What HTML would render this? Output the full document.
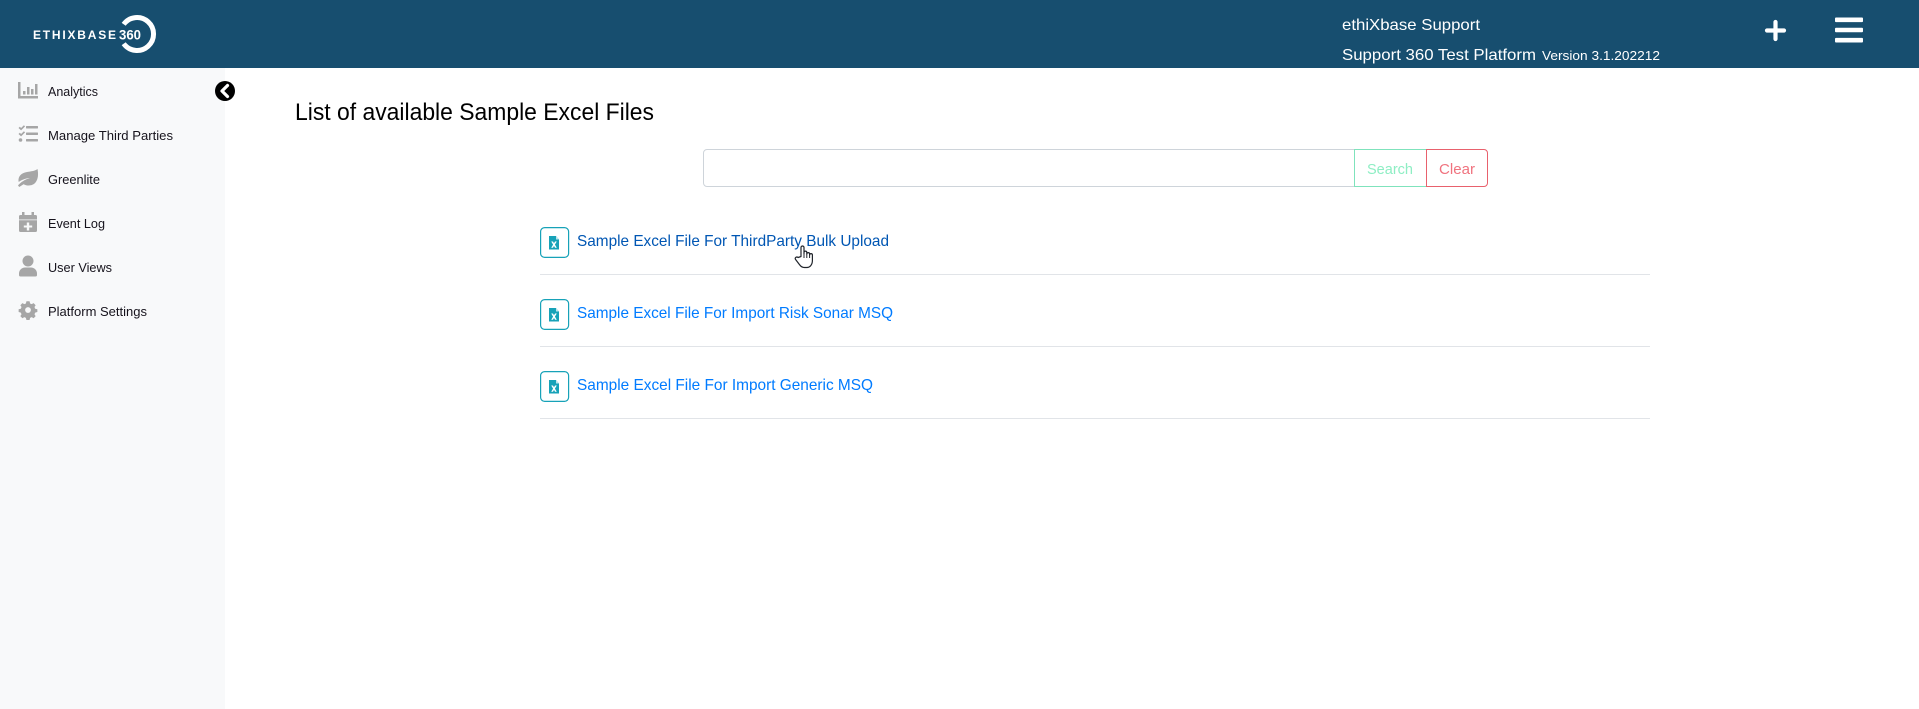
<!DOCTYPE html>
<html lang="en">
<head>
<meta charset="utf-8">
<title>Sample Excel Files</title>
<style>
html,body{margin:0;padding:0;width:1919px;height:709px;overflow:hidden;background:#fff}
svg{display:block}
text{font-family:"Liberation Sans",sans-serif}
</style>
</head>
<body>
<svg width="1919" height="709" viewBox="0 0 1919 709" xmlns="http://www.w3.org/2000/svg">
<defs>
<g id="xl">
<rect x="0.6" y="0.6" width="28" height="29.8" rx="4" fill="#fff" stroke="#17a2b8" stroke-width="1.2"/>
<path d="M9 9h7l3 3.500V22.500H9z" fill="#17a2b8"/>
<path d="M16 9v3.500h3z" fill="#bfe6ec"/>
<path d="M11.200 14.500h1.800l1 1.900 1-1.900h1.800l-1.900 3.100 1.900 3.200h-1.800l-1-1.900-1 1.900h-1.800l1.900-3.200z" fill="#fff"/>
</g>
</defs>

<rect width="1919" height="709" fill="#fff"/>
<rect width="1919" height="68" fill="#174e6f"/>
<rect y="68" width="225" height="641" fill="#f8f9fa"/>

<!-- logo -->
<text x="33" y="39" font-size="12" fill="#fff" font-weight="700" textLength="83" lengthAdjust="spacing">ETHIXBASE</text>
<text x="119" y="39.500" font-size="14" font-weight="700" fill="#fff" textLength="22" lengthAdjust="spacingAndGlyphs">360</text>
<path d="M123.700 24.300A16.500 16.500 0 1 1 123.700 43.700" fill="none" stroke="#fff" stroke-width="5"/>

<!-- header right -->
<text x="1342" y="30" font-size="16" fill="#fff" textLength="138" lengthAdjust="spacingAndGlyphs">ethiXbase Support</text>
<text x="1342" y="60" font-size="16" fill="#fff" textLength="194" lengthAdjust="spacingAndGlyphs">Support 360 Test Platform</text>
<text x="1542" y="60" font-size="13" fill="#fff" textLength="118" lengthAdjust="spacingAndGlyphs">Version 3.1.202212</text>
<path d="M1775.500 22v17M1767 30.500h17" stroke="#fff" stroke-width="4.200" stroke-linecap="round" fill="none"/>
<rect x="1835" y="17.500" width="28" height="4.600" rx="1" fill="#fff"/>
<rect x="1835" y="27.700" width="28" height="4.600" rx="1" fill="#fff"/>
<rect x="1835" y="37.900" width="28" height="4.600" rx="1" fill="#fff"/>

<!-- sidebar icons -->
<g fill="#a6a6a6">
<path d="M18 82h2.500v14H38v2.500H18z"/>
<rect x="23" y="91" width="2.500" height="3.500"/><rect x="27" y="87" width="2.500" height="7.500"/>
<rect x="31" y="89" width="2.500" height="5.500"/><rect x="35" y="84" width="2.500" height="10.500"/>
<path d="M18.500 128l1.300-1.200 1.300 1.200 2.800-2.800 1.200 1.200-4 4z"/>
<path d="M18.500 134l1.300-1.200 1.300 1.200 2.800-2.800 1.200 1.200-4 4z"/>
<circle cx="20.500" cy="140" r="1.800"/>
<rect x="26" y="126" width="12" height="2.500" rx=".6"/><rect x="26" y="132.500" width="12" height="2.500" rx=".6"/><rect x="26" y="139" width="12" height="2.500" rx=".6"/>
<path d="M37.500 169c1 5 .8 10-2 13.500-3 3.500-8 3.700-12 1.700-1.300.8-2.800 1.800-4.300 2.800l-1.200-1.600c3-3.400 7-6 12-7.400-4 .2-8 1.700-11.300 4-1-4.300 1.500-8 5.500-9.300 4.500-1.500 10-1 13.300-3.700z"/>
<path d="M22 212h2.500v3h7v-3H34v3h1.500a1.500 1.500 0 0 1 1.500 1.500v3H19v-3a1.500 1.500 0 0 1 1.500-1.500H22z"/>
<path d="M19 220.300h18v10.200a1.500 1.500 0 0 1-1.500 1.500h-15a1.500 1.500 0 0 1-1.500-1.500zm7.800 2.200v3h-3v2h3v3h2.400v-3h3v-2h-3v-3z" fill-rule="evenodd"/>
<circle cx="28" cy="261" r="5.500"/>
<path d="M19 275v-1.500c0-3.500 2.800-6 6-6h6c3.200 0 6 2.500 6 6v1.500a1.500 1.500 0 0 1-1.500 1.500h-15a1.500 1.500 0 0 1-1.500-1.500z"/>
<path fill-rule="evenodd" d="M26 300.500h4l.7 2.800 2 .9 2.500-1.400 2.600 2.700-1.500 2.400.9 2.100 2.800.7v3.600l-2.800.7-.9 2.100 1.500 2.400-2.600 2.700-2.500-1.400-2 .9-.7 2.800h-4l-.7-2.800-2-.9-2.500 1.400-2.600-2.700 1.500-2.400-.9-2.100-2.800-.7v-3.600l2.800-.7.9-2.100-1.500-2.400 2.600-2.700 2.500 1.400 2-.9zM28 308a3.700 3.700 0 1 0 0 7.400 3.700 3.700 0 0 0 0-7.400z" transform="translate(6.160 66.900) scale(.78)"/>
</g>

<!-- sidebar text -->
<g font-size="13" fill="#16131c">
<text x="48" y="96" textLength="50" lengthAdjust="spacingAndGlyphs">Analytics</text>
<text x="48" y="140" textLength="125" lengthAdjust="spacingAndGlyphs">Manage Third Parties</text>
<text x="48" y="184" textLength="52" lengthAdjust="spacingAndGlyphs">Greenlite</text>
<text x="48" y="228" textLength="57" lengthAdjust="spacingAndGlyphs">Event Log</text>
<text x="48" y="272" textLength="64" lengthAdjust="spacingAndGlyphs">User Views</text>
<text x="48" y="316" textLength="99" lengthAdjust="spacingAndGlyphs">Platform Settings</text>
</g>

<circle cx="225" cy="91" r="10" fill="#000"/>
<path d="M227.500 85.500L222 91l5.500 5.500" fill="none" stroke="#fff" stroke-width="3.200" stroke-linecap="round" stroke-linejoin="round"/>

<!-- title -->
<text x="295" y="120" font-size="24" fill="#000" textLength="359" lengthAdjust="spacingAndGlyphs">List of available Sample Excel Files</text>

<!-- search -->
<path d="M1354.500 149.500H707a3.500 3.500 0 0 0-3.500 3.500v30a3.500 3.500 0 0 0 3.500 3.500h647.500" fill="#fff" stroke="#ced4da"/>
<rect x="1354.500" y="149.500" width="72" height="37" fill="#fff" stroke="#7fe3bc"/>
<text x="1367" y="174" font-size="15" fill="#8eeec4" textLength="46" lengthAdjust="spacingAndGlyphs">Search</text>
<path d="M1426.500 149.500H1484a3.500 3.500 0 0 1 3.500 3.500v30a3.500 3.500 0 0 1-3.500 3.500h-57.500z" fill="#fff" stroke="#e8616d"/>
<text x="1439" y="174" font-size="15" fill="#f0737f" textLength="36" lengthAdjust="spacingAndGlyphs">Clear</text>

<!-- list -->
<use href="#xl" x="540" y="227"/>
<text x="577" y="246" font-size="16" fill="#0056b3" textLength="312" lengthAdjust="spacingAndGlyphs">Sample Excel File For ThirdParty Bulk Upload</text>
<rect x="540" y="274" width="1110" height="1" fill="#e1e4e8"/>
<use href="#xl" x="540" y="299"/>
<text x="577" y="318" font-size="16" fill="#007bff" textLength="316" lengthAdjust="spacingAndGlyphs">Sample Excel File For Import Risk Sonar MSQ</text>
<rect x="540" y="346" width="1110" height="1" fill="#e1e4e8"/>
<use href="#xl" x="540" y="371"/>
<text x="577" y="390" font-size="16" fill="#007bff" textLength="296" lengthAdjust="spacingAndGlyphs">Sample Excel File For Import Generic MSQ</text>
<rect x="540" y="418" width="1110" height="1" fill="#e1e4e8"/>

<!-- hand cursor -->
<path d="M801 256.500V247.500a1.500 1.500 0 0 1 3 0v6.500l0-1.500a1.400 1.400 0 0 1 2.800 0v1.500a1.400 1.400 0 0 1 2.800 0v1a1.400 1.400 0 0 1 2.800 0v5.500c0 4-2.300 7-5.500 7h-2.500c-2.300 0-3.600-1-5-3l-3.800-5c-1.200-1.800 1-3.300 2.500-2z" fill="#fff" stroke="#20242b" stroke-width="1.200" stroke-linejoin="round"/>
<path d="M804 254v4M806.800 254v4M809.600 255v3" stroke="#20242b" stroke-width="1" fill="none"/>
</svg>
</body>
</html>
